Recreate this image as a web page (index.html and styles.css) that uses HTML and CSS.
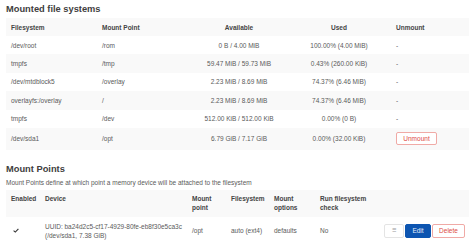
FILE: index.html
```html
<!DOCTYPE html>
<html>
<head>
<meta charset="utf-8">
<link rel="stylesheet" href="styles.css">
</head>
<body>
<div class="page">
  <h3 class="title">Mounted file systems</h3>
  <table class="tbl fs">
    <colgroup>
      <col class="c1"><col class="c2"><col class="c3"><col class="c4"><col class="c5">
    </colgroup>
    <tr class="head">
      <th>Filesystem</th><th>Mount Point</th><th class="ctr">Available</th><th class="ctr">Used</th><th>Unmount</th>
    </tr>
    <tr><td>/dev/root</td><td>/rom</td><td class="ctr">0 B / 4.00 MiB</td><td class="ctr">100.00% (4.00 MiB)</td><td>-</td></tr>
    <tr><td>tmpfs</td><td>/tmp</td><td class="ctr">59.47 MiB / 59.73 MiB</td><td class="ctr">0.43% (260.00 KiB)</td><td>-</td></tr>
    <tr><td>/dev/mtdblock5</td><td>/overlay</td><td class="ctr">2.23 MiB / 8.69 MiB</td><td class="ctr">74.37% (6.46 MiB)</td><td>-</td></tr>
    <tr><td>overlayfs:/overlay</td><td>/</td><td class="ctr">2.23 MiB / 8.69 MiB</td><td class="ctr">74.37% (6.46 MiB)</td><td>-</td></tr>
    <tr><td>tmpfs</td><td>/dev</td><td class="ctr">512.00 KiB / 512.00 KiB</td><td class="ctr">0.00% (0 B)</td><td>-</td></tr>
    <tr class="tall"><td>/dev/sda1</td><td>/opt</td><td class="ctr">6.79 GiB / 7.17 GiB</td><td class="ctr">0.00% (32.00 KiB)</td><td><button class="btn btn-neg unmount">Unmount</button></td></tr>
  </table>

  <h3 class="title second">Mount Points</h3>
  <p class="desc">Mount Points define at which point a memory device will be attached to the filesystem</p>
  <table class="tbl mp">
    <colgroup>
      <col class="m1"><col class="m2"><col class="m3"><col class="m4"><col class="m5"><col class="m6"><col class="m7">
    </colgroup>
    <tr class="head">
      <th>Enabled</th><th>Device</th><th>Mount point</th><th class="nw">Filesystem</th><th>Mount options</th><th>Run filesystem check</th><th></th>
    </tr>
    <tr class="row">
      <td><svg class="check" width="6" height="5" viewBox="0 0 6 5"><path d="M0.6 2.6 L2.3 4.1 L5.4 0.8" fill="none" stroke="#333" stroke-width="1.1"/></svg></td>
      <td>UUID: ba24d2c5-cf17-4929-80fe-eb8f30e5ca3c<br>(/dev/sda1, 7.38 GiB)</td>
      <td>/opt</td>
      <td class="nw">auto (ext4)</td>
      <td>defaults</td>
      <td>No</td>
      <td class="actions">
        <div class="btns">
          <button class="btn btn-drag">&#9776;</button>
          <button class="btn btn-edit">Edit</button>
          <button class="btn btn-neg">Delete</button>
        </div>
      </td>
    </tr>
  </table>
</div>
</body>
</html>
```

FILE: styles.css
```css
html, body {
  margin: 0;
  padding: 0;
  background: #fff;
}
body {
  font-family: "Liberation Sans", Arial, sans-serif;
  font-size: 6.5px;
  color: #5a5a5a;
}
.page {
  padding: 0 6px;
}
.title {
  margin: 0;
  font-size: 9.3px;
  line-height: 18px;
  font-weight: bold;
  color: #404040;
}
.title.second {
  margin-top: 10px;
}
.desc {
  margin: 0 0 3px 0;
  line-height: 9px;
  color: #5a5a5a;
}
.tbl {
  border-collapse: collapse;
  table-layout: fixed;
  width: 463px;
}
.tbl th, .tbl td {
  padding: 0 4px 0 5px;
  text-align: left;
  line-height: 9px;
  vertical-align: middle;
  white-space: nowrap;
  overflow: visible;
}
.tbl th {
  font-weight: bold;
  color: #444;
}
.tbl tr:nth-child(odd) {
  background: #f9f9f9;
}
.fs .c1 { width: 91px; }
.fs .c2 { width: 94px; }
.fs .c3 { width: 96px; }
.fs .c4 { width: 104px; }
.fs .c5 { width: 78px; }
.fs th { height: 18px; }
.fs td { height: 18.4px; }
.fs tr.tall td { height: 22px; }
.tbl .ctr { text-align: center; padding: 0; }

.mp .m1 { width: 34px; }
.mp .m2 { width: 147px; }
.mp .m3 { width: 39px; }
.mp .m4 { width: 43px; }
.mp .m5 { width: 46px; }
.mp .m6 { width: 61px; }
.mp .m7 { width: 93px; }
.mp th {
  white-space: normal;
  vertical-align: top;
  padding-top: 4.5px;
  height: 22.5px;
}
.mp th.nw, .mp td.nw { white-space: nowrap; }
.mp tr.row { background: #fff; }
.mp tr.row td { height: 28px; }
.check { display: block; margin-left: 2px; }

.btn {
  font-family: "Liberation Sans", Arial, sans-serif;
  font-size: 6.5px;
  line-height: 1;
  box-sizing: border-box;
  border-radius: 2px;
  padding: 0;
  margin: 0;
  cursor: pointer;
}
.btn-neg {
  background: #fff;
  border: 1px solid #f0aaa6;
  color: #dd4a44;
}
.unmount {
  width: 41px;
  height: 13px;
}
.actions { padding-right: 6px; }
.btns {
  display: flex;
  justify-content: flex-end;
  gap: 1px;
}
.btns .btn { height: 14px; }
.btn-drag {
  width: 20px;
  background: #fff;
  border: 1px solid #e4e4e4;
  color: #999;
  font-size: 5px;
}
.btn-edit {
  width: 26px;
  background: #0d55b1;
  border: 1px solid #0d55b1;
  color: #e8eefa;
}
.btns .btn-neg { width: 33px; }
```
